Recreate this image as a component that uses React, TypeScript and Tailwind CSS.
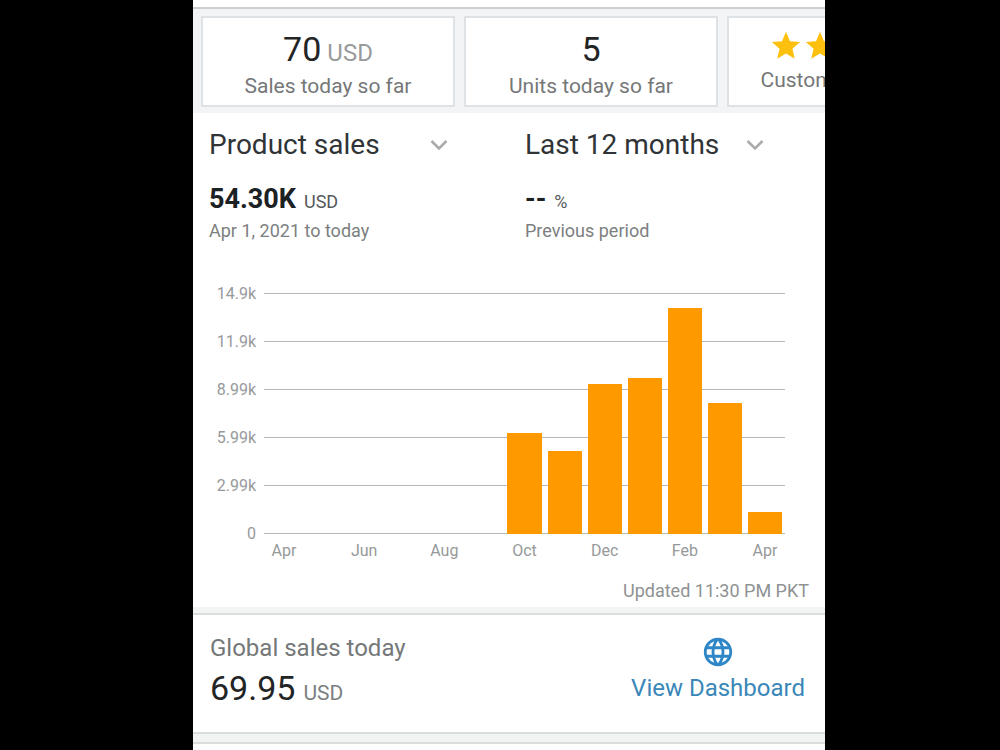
import { ReactNode } from "react";
import { MdLanguage, MdStar } from "react-icons/md";

const MAX_SALES = 14.98;

const ticks = ["14.9k", "11.9k", "8.99k", "5.99k", "2.99k", "0"];

const months = [
  { name: "Apr", sales: 0 },
  { name: "May", sales: 0 },
  { name: "Jun", sales: 0 },
  { name: "Jul", sales: 0 },
  { name: "Aug", sales: 0 },
  { name: "Sep", sales: 0 },
  { name: "Oct", sales: 6.3 },
  { name: "Nov", sales: 5.18 },
  { name: "Dec", sales: 9.3 },
  { name: "Jan", sales: 9.67 },
  { name: "Feb", sales: 14.05 },
  { name: "Mar", sales: 8.12 },
  { name: "Apr", sales: 1.37 },
];

function Card({ label, children }: { label: string; children: ReactNode }) {
  return (
    <div className="flex h-[91px] w-[254px] shrink-0 flex-col items-center gap-[3px] border-2 border-[#dfe2e4] bg-white pt-[11px]">
      {children}
      <p className="text-[21px] leading-7 whitespace-nowrap text-[#757778]">
        {label}
      </p>
    </div>
  );
}

function Picker({ label, options }: { label: string; options: string[] }) {
  return (
    <div className="grid w-[239px] items-center">
      <select
        aria-label={label}
        className="col-start-1 row-start-1 h-9 w-full appearance-none bg-transparent text-[28px] leading-9 text-[#303436]"
      >
        {options.map((o) => (
          <option key={o}>{o}</option>
        ))}
      </select>
      <svg
        viewBox="0 0 18 12"
        className="pointer-events-none col-start-1 row-start-1 h-3 w-[18px] justify-self-end"
        fill="none"
        stroke="#a9abac"
        strokeWidth="2.6"
      >
        <path d="M1.5 2 L9 9.5 L16.5 2" />
      </svg>
    </div>
  );
}

function Stat({
  value,
  unit,
  note,
}: {
  value: string;
  unit: string;
  note: string;
}) {
  return (
    <div className="mt-[18px]">
      <p className="flex items-baseline gap-2 text-[27px] leading-9 font-bold text-[#1c2124]">
        {value}
        <span className="text-[18px] leading-none font-normal text-[#55595b]">
          {unit}
        </span>
      </p>
      <p className="mt-0.5 text-[18px] leading-6 text-[#7c7f80]">{note}</p>
    </div>
  );
}

function SalesChart() {
  return (
    <div>
      <div className="grid h-[241px]">
        <div className="col-start-1 row-start-1 flex flex-col justify-between">
          {ticks.map((t) => (
            <div key={t} className="flex h-px items-center">
              <span className="w-[47px] text-right text-[16px] leading-5 text-[#96999a]">
                {t}
              </span>
              <span className="ml-2 h-px flex-1 bg-[#b4b6b7]" />
            </div>
          ))}
        </div>
        <div className="col-start-1 row-start-1 ml-[55px] flex items-end">
          {months.map((m, id) => (
            <div key={id} className="flex h-full flex-1 items-end px-[3px]">
              <div
                className="w-full bg-[#ff9900]"
                style={{ height: `${(m.sales / MAX_SALES) * 100}%` }}
              />
            </div>
          ))}
        </div>
      </div>
      <div className="mt-[6px] ml-[55px] flex h-[19px] overflow-hidden">
        {months.map((m, id) => (
          <span
            key={id}
            className="flex-1 text-center text-[16px] leading-[22px] text-[#96999a]"
          >
            {id % 2 === 0 && m.name}
          </span>
        ))}
      </div>
    </div>
  );
}

export default function App() {
  return (
    <div className="min-h-screen bg-black pr-[175px] pl-[193px] font-['Roboto',sans-serif]">
      <main className="flex min-h-screen flex-col bg-white">
        <section className="mt-[7px] flex gap-[9px] overflow-hidden border-t-2 border-[#cccecf] bg-[#f2f4f5] px-2 pt-[7px] pb-[6px]">
          <Card label="Sales today so far">
            <p className="flex items-baseline gap-1.5 text-[34px] leading-10 text-[#222425]">
              70
              <span className="text-[24px] leading-none text-[#989a9b]">
                USD
              </span>
            </p>
          </Card>
          <Card label="Units today so far">
            <p className="text-[34px] leading-10 text-[#222425]">5</p>
          </Card>
          <Card label="Customer Feedback">
            <div className="flex text-[#fdc00f]">
              {[1, 2, 3, 4, 5].map((n) => (
                <MdStar key={n} className="size-[34px]" />
              ))}
            </div>
          </Card>
        </section>

        <section className="px-4 pt-[14px]">
          <div className="grid grid-cols-[316px_1fr]">
            <div>
              <Picker
                label="Metric"
                options={["Product sales", "Units ordered"]}
              />
              <Stat value="54.30K" unit="USD" note="Apr 1, 2021 to today" />
            </div>
            <div>
              <Picker
                label="Period"
                options={["Last 12 months", "Last 30 days"]}
              />
              <Stat value="--" unit="%" note="Previous period" />
            </div>
          </div>

          <div className="mt-[50px] mr-6">
            <SalesChart />
          </div>

          <p className="mt-5 mb-1 text-right text-[18px] leading-6 text-[#8f9293]">
            Updated 11:30 PM PKT
          </p>
        </section>

        <div className="h-2 border-b-2 border-[#dadddd] bg-[#f2f4f4]" />

        <section className="flex items-start justify-between pt-[17px] pr-5 pb-6 pl-[17px]">
          <div>
            <p className="text-[24px] leading-8 text-[#757879]">
              Global sales today
            </p>
            <p className="mt-1 flex items-baseline gap-2 text-[34px] leading-10 text-[#222425]">
              69.95
              <span className="text-[21px] leading-none text-[#7c7f80]">
                USD
              </span>
            </p>
          </div>
          <a
            href="#dashboard"
            className="flex flex-col items-center gap-[3px] pt-[3px] text-[24px] leading-8 text-[#3a87b8]"
          >
            <MdLanguage className="size-[34px] text-[#2f86c6]" />
            View Dashboard
          </a>
        </section>

        <div className="h-3 border-y-2 border-[#dadddd] bg-[#f2f4f4]" />
      </main>
    </div>
  );
}
